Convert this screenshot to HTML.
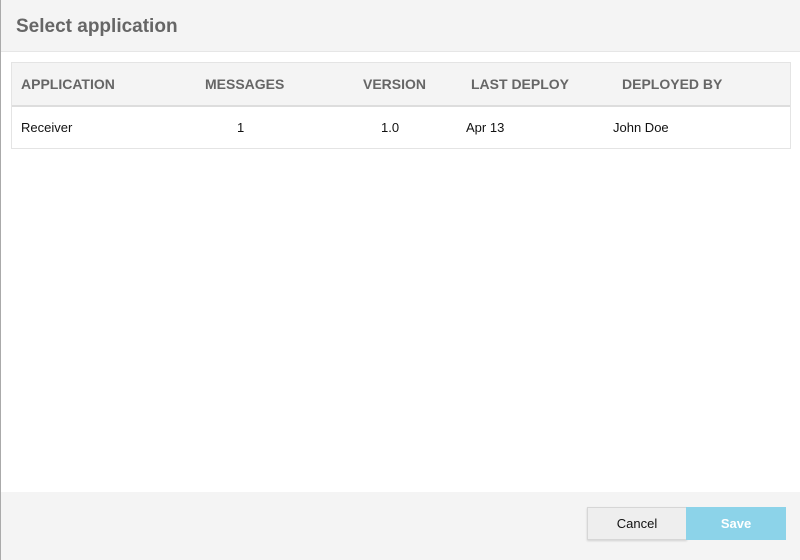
<!DOCTYPE html>
<html><head><style>
body{margin:0;width:800px;height:560px;background:#fff;font-family:"Liberation Sans",Arial,sans-serif;position:relative;overflow:hidden}
.a{position:absolute;white-space:nowrap}
.h{font-weight:bold;font-size:14px;color:#666;top:76px}
.d{font-size:13px;color:#111;top:120px}
</style></head><body>
<div class="a" style="left:0;top:0;width:800px;height:51px;background:#f4f4f4;border-bottom:1px solid #e6e6e6"></div>
<div class="a" style="left:16px;top:16px;font-size:19px;font-weight:bold;color:#666">Select application</div>
<div class="a" style="left:11px;top:62px;width:778px;height:85px;border:1px solid #e4e4e4"></div>
<div class="a" style="left:12px;top:63px;width:778px;height:42px;background:#f4f4f4;border-bottom:2px solid #ddd"></div>
<div class="a h" style="left:21px">APPLICATION</div>
<div class="a h" style="left:205px">MESSAGES</div>
<div class="a h" style="left:363px">VERSION</div>
<div class="a h" style="left:471px">LAST DEPLOY</div>
<div class="a h" style="left:622px">DEPLOYED BY</div>
<div class="a d" style="left:21px">Receiver</div>
<div class="a d" style="left:237px">1</div>
<div class="a d" style="left:381px">1.0</div>
<div class="a d" style="left:466px">Apr 13</div>
<div class="a d" style="left:613px">John Doe</div>
<div class="a" style="left:0;top:492px;width:800px;height:68px;background:#f4f4f4"></div>
<div class="a" style="left:0;top:0;width:1px;height:560px;background:#aaa"></div>
<div class="a" style="left:587px;top:507px;width:98px;height:31px;background:#eee;border:1px solid #d6d6d6;box-shadow:0 1px 2px rgba(0,0,0,.15);font-size:13px;color:#111;text-align:center;line-height:31px">Cancel</div>
<div class="a" style="left:686px;top:507px;width:100px;height:33px;background:#8cd3e9;font-size:13px;color:#fff;font-weight:bold;text-align:center;line-height:33px">Save</div>
</body></html>
